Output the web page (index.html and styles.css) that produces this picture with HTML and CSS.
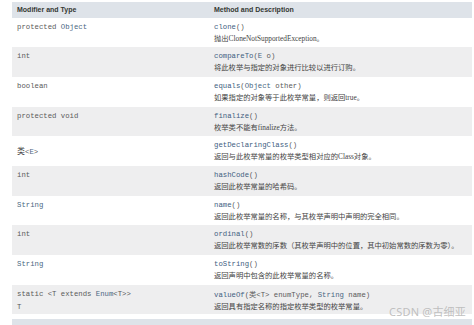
FILE: index.html
```html
<!DOCTYPE html>
<html>
<head>
<meta charset="utf-8">
<link rel="stylesheet" href="styles.css">
</head>
<body>
<div class="page">
  <div class="summary">
    <div class="row head">
      <div class="c1">Modifier and Type</div>
      <div class="c2">Method and Description</div>
    </div>
    <div class="row alt0">
      <div class="c1 code">protected <span class="link">Object</span></div>
      <div class="c2"><div class="code"><span class="mname">clone</span>()</div><div class="desc">抛出CloneNotSupportedException。</div></div>
    </div>
    <div class="row alt1">
      <div class="c1 code">int</div>
      <div class="c2"><div class="code"><span class="mname">compareTo</span>(<span class="link">E</span> o)</div><div class="desc">将此枚举与指定的对象进行比较以进行订购。</div></div>
    </div>
    <div class="row alt0">
      <div class="c1 code">boolean</div>
      <div class="c2"><div class="code"><span class="mname">equals</span>(<span class="link">Object</span> other)</div><div class="desc">如果指定的对象等于此枚举常量，则返回true。</div></div>
    </div>
    <div class="row alt1">
      <div class="c1 code">protected void</div>
      <div class="c2"><div class="code"><span class="mname">finalize</span>()</div><div class="desc">枚举类不能有finalize方法。</div></div>
    </div>
    <div class="row alt0">
      <div class="c1"><span class="desc">类</span><span class="code">&lt;<span class="link">E</span>&gt;</span></div>
      <div class="c2"><div class="code"><span class="mname">getDeclaringClass</span>()</div><div class="desc">返回与此枚举常量的枚举类型相对应的Class对象。</div></div>
    </div>
    <div class="row alt1">
      <div class="c1 code">int</div>
      <div class="c2"><div class="code"><span class="mname">hashCode</span>()</div><div class="desc">返回此枚举常量的哈希码。</div></div>
    </div>
    <div class="row alt0">
      <div class="c1 code"><span class="link">String</span></div>
      <div class="c2"><div class="code"><span class="mname">name</span>()</div><div class="desc">返回此枚举常量的名称，与其枚举声明中声明的完全相同。</div></div>
    </div>
    <div class="row alt1">
      <div class="c1 code">int</div>
      <div class="c2"><div class="code"><span class="mname">ordinal</span>()</div><div class="desc">返回此枚举常数的序数（其枚举声明中的位置，其中初始常数的序数为零）。</div></div>
    </div>
    <div class="row alt0">
      <div class="c1 code"><span class="link">String</span></div>
      <div class="c2"><div class="code"><span class="mname">toString</span>()</div><div class="desc">返回声明中包含的此枚举常量的名称。</div></div>
    </div>
    <div class="row alt1">
      <div class="c1 code">static &lt;T extends <span class="link">Enum</span>&lt;T&gt;&gt;<br>T</div>
      <div class="c2"><div class="code"><span class="mname">valueOf</span>(<span class="cjk">类</span>&lt;T&gt; enumType, <span class="link">String</span> name)</div><div class="desc">返回具有指定名称的指定枚举类型的枚举常量。</div></div>
    </div>
  </div>
  <div class="footband"></div>
  <div class="watermark">CSDN @古细亚</div>
</div>
</body>
</html>
```
FILE: styles.css
```css
html, body {
  margin: 0;
  padding: 0;
  background: #ffffff;
}
.page {
  position: relative;
  width: 474px;
  height: 325px;
  overflow: hidden;
  padding: 2px 2px 0 12px;
  box-sizing: border-box;
  color: #353833;
}
.summary {
  display: flex;
  flex-direction: column;
}
.row {
  display: grid;
  grid-template-columns: 197px 1fr;
  height: 29.7px;
  box-sizing: border-box;
}
.row > div {
  padding: 4px 5px 0 5px;
}
.head {
  height: 15.5px;
  background: #dee3e9;
  font-family: "Liberation Sans", Arial, sans-serif;
  font-weight: bold;
  font-size: 7px;
  line-height: 15.5px;
  color: #353833;
}
.head > div {
  padding-top: 0;
}
.alt0 { background: #ffffff; }
.alt1 { background: #eeeeef; }
.code {
  font-family: "Liberation Mono", "Courier New", monospace;
  font-size: 7.3px;
  line-height: 11px;
  color: #5a5a5a;
}
.c1.code {
  line-height: 13px;
  padding-top: 3px;
}
.link { color: #4a6782; }
.mname { color: #41607f; }
.cjk, .desc {
  font-family: "Liberation Serif", "Noto Sans CJK SC", serif;
}
.desc {
  font-size: 7.3px;
  line-height: 12px;
  color: #444444;
}
.c1 .desc { font-size: 8px; }
.footband {
  margin-top: 5px;
  height: 10px;
  background: #dee3e9;
}
.watermark {
  position: absolute;
  right: 8px;
  top: 303px;
  font-family: "Noto Sans", "Noto Sans CJK SC", sans-serif;
  font-size: 11px;
  color: rgba(185, 185, 185, 0.9);
  letter-spacing: 0.2px;
}
```
